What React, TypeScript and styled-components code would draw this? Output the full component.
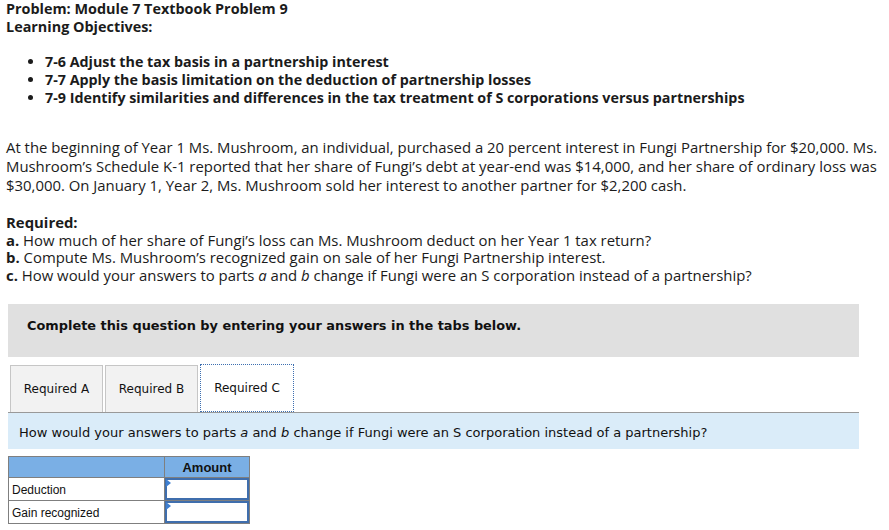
import React from 'react'
import styled, { createGlobalStyle } from 'styled-components';

const GlobalStyle = createGlobalStyle`
    html, body {
        margin: 0;
        padding: 0;
        background: #ffffff;
    }
    body {
        font-family: "Open Sans", Lato, sans-serif;
        color: #1b1b1b;
    }
`;

const Page = styled.div`
    width: 889px;
    height: 530px;
    overflow: hidden;
    padding: 0 3px 0 6px;
    box-sizing: border-box;
`;

const Intro = styled.div`
    padding: 0;
`;

const Title = styled.div`
    font-size: 14.4px;
    font-weight: 700;
    line-height: 18px;
`;

const Objectives = styled.ul`
    margin: 17px 0 0 0;
    padding: 0 0 0 39px;
    font-size: 14.3px;
    font-weight: 700;
    line-height: 18px;
`;

const Paragraph = styled.p`
    margin: 31px 0 0 0;
    font-size: 14.9px;
    line-height: 19px;
`;

const Required = styled.div`
    margin-top: 19px;
    font-size: 14.9px;
    line-height: 17.5px;
`;

const Strong = styled.span`
    font-weight: 700;
`;

const Panel = styled.div`
    margin: 20px 27px 0 2px;
    height: 53px;
    background: #e0e0e0;
    font-family: "DejaVu Sans", Verdana, sans-serif;
    font-size: 12.9px;
    font-weight: 700;
    padding: 14px 0 0 19px;
    box-sizing: border-box;
    color: #111;
`;

const Tabs = styled.div`
    display: flex;
    gap: 2px;
    margin: 8px 27px 0 2px;
    padding-left: 2px;
    border-bottom: 1px solid #999999;
    height: 47px;
`;

const Tab = styled.div<{ $active?: boolean }>`
    display: flex;
    align-items: center;
    justify-content: center;
    width: ${p => (p.$active ? '94px' : '93px')};
    height: ${p => (p.$active ? '48px' : '47px')};
    box-sizing: border-box;
    font-family: "DejaVu Sans", Verdana, sans-serif;
    font-size: 12px;
    color: #111;
    background: ${p => (p.$active ? '#ffffff' : '#f2f2f2')};
    border: ${p => (p.$active ? '1px dotted #3d6fb0' : '1px solid #c6c6c6')};
    border-bottom: ${p => (p.$active ? '1px dotted #3d6fb0' : 'none')};
    margin-top: ${p => (p.$active ? '-1px' : '0')};
`;

const Question = styled.div`
    margin: 0 27px 0 2px;
    height: 36px;
    background: #daecf9;
    display: flex;
    align-items: center;
    padding: 2px 0 0 11px;
    box-sizing: border-box;
    font-family: "DejaVu Sans", Verdana, sans-serif;
    font-size: 13px;
    color: #111;
`;

const AnswerTable = styled.table`
    margin: 7px 0 0 2px;
    border-collapse: collapse;
    font-family: "Liberation Sans", Arial, sans-serif;
    font-size: 12px;
    color: #111;
`;

const HeadCell = styled.th`
    background: #7aafe5;
    border: 1px solid #7f7f7f;
    height: 20px;
    padding: 0;
    font-weight: 700;
    font-size: 13px;
    text-align: center;
`;

const LabelCell = styled.td`
    width: 152px;
    height: 21px;
    border: 1px solid #7f7f7f;
    padding: 1px 0 0 3px;
    vertical-align: middle;
`;

const InputCell = styled.td`
    width: 84px;
    border: 1px solid #7f7f7f;
    padding: 0;
    position: relative;
`;

const AnswerInput = styled.div`
    height: 18px;
    border: 2px solid #3f6ead;
    background: #ffffff;
    margin: 0;
`;

const Flag = styled.span`
    position: absolute;
    left: 1px;
    top: 1px;
    width: 0;
    height: 0;
    border-top: 4px solid transparent;
    border-bottom: 4px solid transparent;
    border-left: 5px solid #3f7fd0;
`;

const App = () => {
    const objectives = [
        '7-6 Adjust the tax basis in a partnership interest',
        '7-7 Apply the basis limitation on the deduction of partnership losses',
        '7-9 Identify similarities and differences in the tax treatment of S corporations versus partnerships',
    ];
    const tabs = ['Required A', 'Required B', 'Required C'];
    const rows = ['Deduction', 'Gain recognized'];
    return (
        <>
            <GlobalStyle />
            <Page>
                <Intro>
                    <Title>Problem: Module 7 Textbook Problem 9</Title>
                    <Title>Learning Objectives:</Title>
                    <Objectives>
                        {objectives.map((o, idx) => (
                            <li key={`objective-` + idx}>{o}</li>
                        ))}
                    </Objectives>
                    <Paragraph>
                        At the beginning of Year 1 Ms. Mushroom, an individual, purchased a 20 percent interest in Fungi Partnership for $20,000. Ms. Mushroom’s Schedule K-1 reported that her share of Fungi’s debt at year-end was $14,000, and her share of ordinary loss was $30,000. On January 1, Year 2, Ms. Mushroom sold her interest to another partner for $2,200 cash.
                    </Paragraph>
                    <Required>
                        <Strong>Required:</Strong>
                        <div><Strong>a.</Strong> How much of her share of Fungi’s loss can Ms. Mushroom deduct on her Year 1 tax return?</div>
                        <div><Strong>b.</Strong> Compute Ms. Mushroom’s recognized gain on sale of her Fungi Partnership interest.</div>
                        <div><Strong>c.</Strong> How would your answers to parts <i>a</i> and <i>b</i> change if Fungi were an S corporation instead of a partnership?</div>
                    </Required>
                </Intro>
                <Panel>Complete this question by entering your answers in the tabs below.</Panel>
                <Tabs>
                    {tabs.map((t, idx) => (
                        <Tab key={`tab-` + idx} $active={idx === 2}>{t}</Tab>
                    ))}
                </Tabs>
                <Question>
                    How would your answers to parts&nbsp;<i>a</i>&nbsp;and&nbsp;<i>b</i>&nbsp;change if Fungi were an S corporation instead of a partnership?
                </Question>
                <AnswerTable>
                    <thead>
                        <tr>
                            <HeadCell></HeadCell>
                            <HeadCell>Amount</HeadCell>
                        </tr>
                    </thead>
                    <tbody>
                        {rows.map((r, idx) => (
                            <tr key={`row-` + idx}>
                                <LabelCell>{r}</LabelCell>
                                <InputCell>
                                    <AnswerInput />
                                    <Flag />
                                </InputCell>
                            </tr>
                        ))}
                    </tbody>
                </AnswerTable>
            </Page>
        </>
    );
}

export default App;
